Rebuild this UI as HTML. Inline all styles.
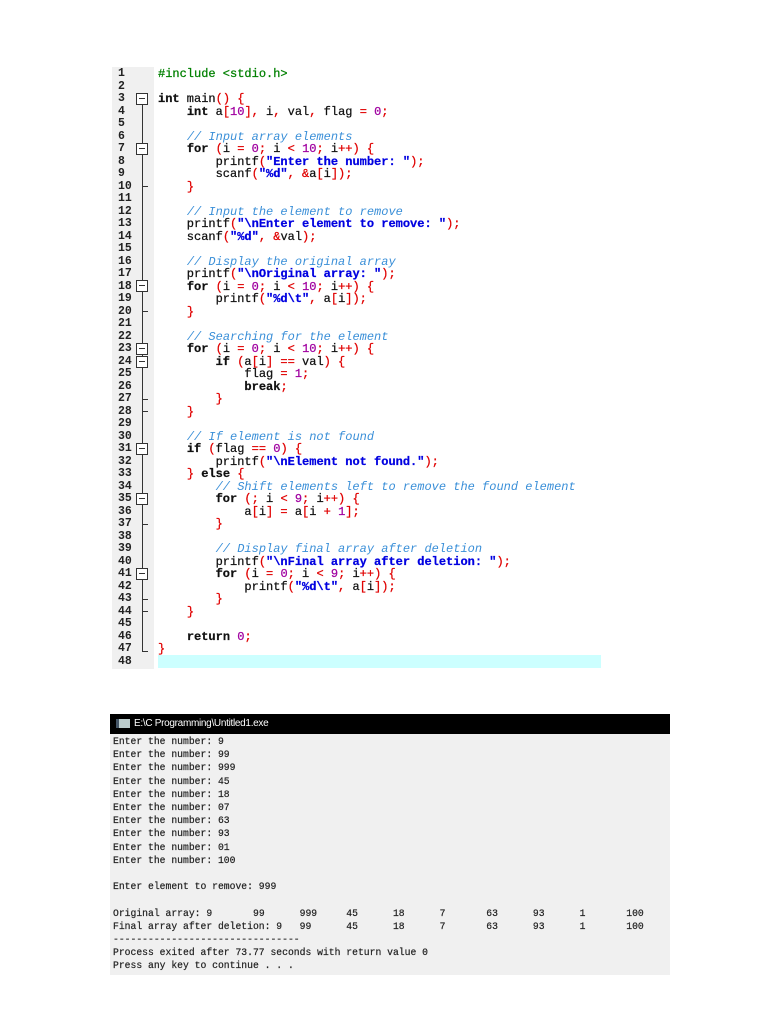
<!DOCTYPE html>
<html><head><meta charset="utf-8"><style>
body{margin:0;width:768px;height:1024px;background:#fff;position:relative;overflow:hidden}
#gut{position:absolute;left:112px;top:67px;width:42px;height:602px;background:#f0f0f0}
#gl{position:absolute;left:118px;top:68px;width:22px;margin:0;font:bold 11.5px/12.5px "Liberation Mono",monospace;color:#222;text-align:left}
#code{position:absolute;left:158px;top:68px;margin:0;font:12px/12.5px "Liberation Mono",monospace;color:#111;white-space:pre;-webkit-text-stroke:0.25px}
.k{font-weight:bold}.s{color:#0000e0;font-weight:bold}.n{color:#a000a0}.o{color:#e00000}
.c{color:#3a8fd8;font-style:italic;-webkit-text-stroke:0}.p{color:#008000}
#hl{position:absolute;left:158px;top:655px;width:443px;height:13px;background:#ccffff}
.fl{position:absolute;left:142px;width:1px;background:#333}
.bx{position:absolute;left:136px;width:12px;height:12px;border:1px solid #333;background:#fff;box-sizing:border-box}
.bx:after{content:"";position:absolute;left:2px;top:4px;width:6px;height:1px;background:#333}
.tk{position:absolute;left:142px;width:6px;height:1px;background:#333}
#tb{position:absolute;left:110px;top:714px;width:560px;height:20px;background:#000;color:#fff;font:10px/20px "Liberation Sans",sans-serif;letter-spacing:-0.3px}
#tb i{position:absolute;left:6px;top:5px;width:11px;height:9px;background:#bcc;border-left:3px solid #456}
#con{position:absolute;left:110px;top:734px;width:560px;height:241px;background:#f0f0f0}
#ct{position:absolute;left:113px;top:735px;margin:0;font:9.73px/13.2px "Liberation Mono",monospace;color:#222;white-space:pre;tab-size:8;-moz-tab-size:8;-webkit-text-stroke:0.2px}
</style></head><body>
<div id="gut"></div>
<div id="hl"></div>
<pre id="gl">1
2
3
4
5
6
7
8
9
10
11
12
13
14
15
16
17
18
19
20
21
22
23
24
25
26
27
28
29
30
31
32
33
34
35
36
37
38
39
40
41
42
43
44
45
46
47
48</pre>
<div class="fl" style="top:104px;height:548px"></div>
<div class="tk" style="top:651px"></div>
<div class="bx" style="top:93px"></div>
<div class="bx" style="top:143px"></div>
<div class="tk" style="top:186px"></div>
<div class="bx" style="top:280px"></div>
<div class="tk" style="top:311px"></div>
<div class="bx" style="top:343px"></div>
<div class="bx" style="top:356px"></div>
<div class="tk" style="top:399px"></div>
<div class="tk" style="top:411px"></div>
<div class="bx" style="top:443px"></div>
<div class="bx" style="top:493px"></div>
<div class="tk" style="top:524px"></div>
<div class="bx" style="top:568px"></div>
<div class="tk" style="top:599px"></div>
<div class="tk" style="top:611px"></div>
<pre id="code"><span class="p">#include &lt;stdio.h&gt;</span>

<span class="k">int</span> main<span class="o">() {</span>
    <span class="k">int</span> a<span class="o">[</span><span class="n">10</span><span class="o">],</span> i<span class="o">,</span> val<span class="o">,</span> flag <span class="o">=</span> <span class="n">0</span><span class="o">;</span>

    <span class="c">// Input array elements</span>
    <span class="k">for</span> <span class="o">(</span>i <span class="o">=</span> <span class="n">0</span><span class="o">;</span> i <span class="o">&lt;</span> <span class="n">10</span><span class="o">;</span> i<span class="o">++) {</span>
        printf<span class="o">(</span><span class="s">"Enter the number: "</span><span class="o">);</span>
        scanf<span class="o">(</span><span class="s">"%d"</span><span class="o">, &amp;</span>a<span class="o">[</span>i<span class="o">]);</span>
    <span class="o">}</span>

    <span class="c">// Input the element to remove</span>
    printf<span class="o">(</span><span class="s">"\nEnter element to remove: "</span><span class="o">);</span>
    scanf<span class="o">(</span><span class="s">"%d"</span><span class="o">, &amp;</span>val<span class="o">);</span>

    <span class="c">// Display the original array</span>
    printf<span class="o">(</span><span class="s">"\nOriginal array: "</span><span class="o">);</span>
    <span class="k">for</span> <span class="o">(</span>i <span class="o">=</span> <span class="n">0</span><span class="o">;</span> i <span class="o">&lt;</span> <span class="n">10</span><span class="o">;</span> i<span class="o">++) {</span>
        printf<span class="o">(</span><span class="s">"%d\t"</span><span class="o">,</span> a<span class="o">[</span>i<span class="o">]);</span>
    <span class="o">}</span>

    <span class="c">// Searching for the element</span>
    <span class="k">for</span> <span class="o">(</span>i <span class="o">=</span> <span class="n">0</span><span class="o">;</span> i <span class="o">&lt;</span> <span class="n">10</span><span class="o">;</span> i<span class="o">++) {</span>
        <span class="k">if</span> <span class="o">(</span>a<span class="o">[</span>i<span class="o">] ==</span> val<span class="o">) {</span>
            flag <span class="o">=</span> <span class="n">1</span><span class="o">;</span>
            <span class="k">break</span><span class="o">;</span>
        <span class="o">}</span>
    <span class="o">}</span>

    <span class="c">// If element is not found</span>
    <span class="k">if</span> <span class="o">(</span>flag <span class="o">==</span> <span class="n">0</span><span class="o">) {</span>
        printf<span class="o">(</span><span class="s">"\nElement not found."</span><span class="o">);</span>
    <span class="o">}</span> <span class="k">else</span> <span class="o">{</span>
        <span class="c">// Shift elements left to remove the found element</span>
        <span class="k">for</span> <span class="o">(;</span> i <span class="o">&lt;</span> <span class="n">9</span><span class="o">;</span> i<span class="o">++) {</span>
            a<span class="o">[</span>i<span class="o">] =</span> a<span class="o">[</span>i <span class="o">+</span> <span class="n">1</span><span class="o">];</span>
        <span class="o">}</span>

        <span class="c">// Display final array after deletion</span>
        printf<span class="o">(</span><span class="s">"\nFinal array after deletion: "</span><span class="o">);</span>
        <span class="k">for</span> <span class="o">(</span>i <span class="o">=</span> <span class="n">0</span><span class="o">;</span> i <span class="o">&lt;</span> <span class="n">9</span><span class="o">;</span> i<span class="o">++) {</span>
            printf<span class="o">(</span><span class="s">"%d\t"</span><span class="o">,</span> a<span class="o">[</span>i<span class="o">]);</span>
        <span class="o">}</span>
    <span class="o">}</span>

    <span class="k">return</span> <span class="n">0</span><span class="o">;</span>
<span class="o">}</span>
</pre>
<div id="tb"><i></i><span style="position:absolute;left:24px">E:\C Programming\Untitled1.exe</span></div>
<div id="con"></div>
<pre id="ct">Enter the number: 9
Enter the number: 99
Enter the number: 999
Enter the number: 45
Enter the number: 18
Enter the number: 07
Enter the number: 63
Enter the number: 93
Enter the number: 01
Enter the number: 100

Enter element to remove: 999

Original array: 9	99	999	45	18	7	63	93	1	100
Final array after deletion: 9	99	45	18	7	63	93	1	100
--------------------------------
Process exited after 73.77 seconds with return value 0
Press any key to continue . . .</pre>
</body></html>
